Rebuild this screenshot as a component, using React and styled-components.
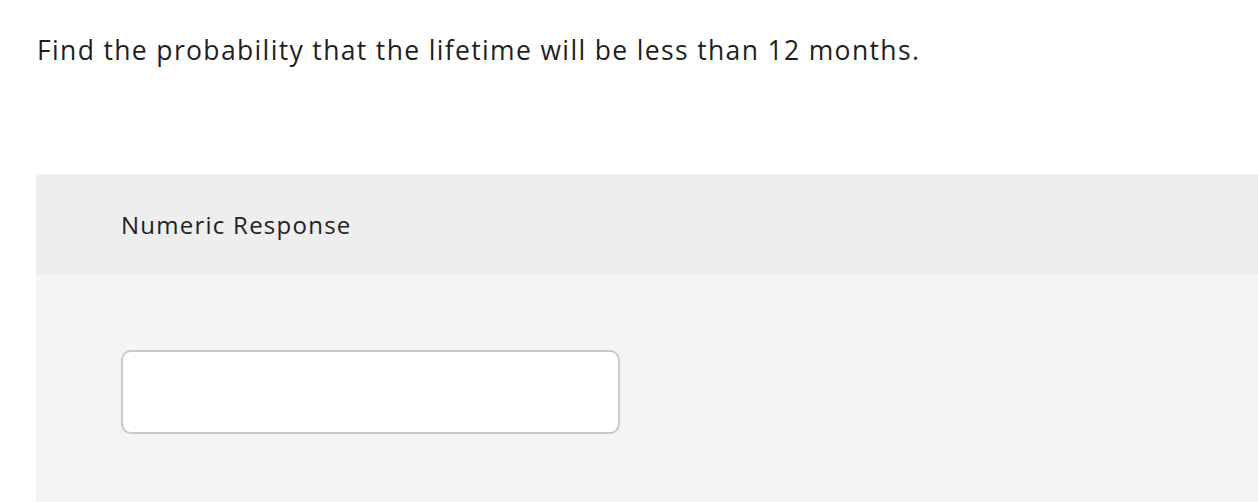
import React from "react";
import styled, { createGlobalStyle } from "styled-components";

const Global = createGlobalStyle`
  body {
    margin: 0;
    background: #fff;
    font-family: "Open Sans", Lato, sans-serif;
    color: #222;
    overflow: hidden;
  }
`;

const Page = styled.div`
  padding-top: 30px;
  height: 502px;
  overflow: hidden;
`;

const Question = styled.p`
  margin: 0 0 0 37px;
  font-size: 26.5px;
  line-height: 40px;
  letter-spacing: 1.35px;
  color: #1f1f1f;
`;

const Panel = styled.section`
  margin: 104px -20px 0 36px;
  border-radius: 4px 0 0 0;
  overflow: hidden;
`;

const Header = styled.header`
  height: 100px;
  background: #eeeeee;
  display: flex;
  align-items: center;
  padding-left: 85px;
  font-size: 24px;
  letter-spacing: 1.25px;
  color: #222;
`;

const Body = styled.div`
  background: #f4f4f4;
  padding: 76px 0 120px 85px;
`;

const Input = styled.input`
  display: block;
  box-sizing: border-box;
  width: 499px;
  height: 84px;
  border: 2px solid #c9c9c9;
  border-radius: 10px;
  background: #fff;
  outline: none;
  font-size: 20px;
  padding: 0 16px;
`;

export default function App() {
  return (
    <Page>
      <Global />
      <Question>Find the probability that the lifetime will be less than 12 months.</Question>
      <Panel>
        <Header>Numeric Response</Header>
        <Body>
          <Input type="text" />
        </Body>
      </Panel>
    </Page>
  );
}
